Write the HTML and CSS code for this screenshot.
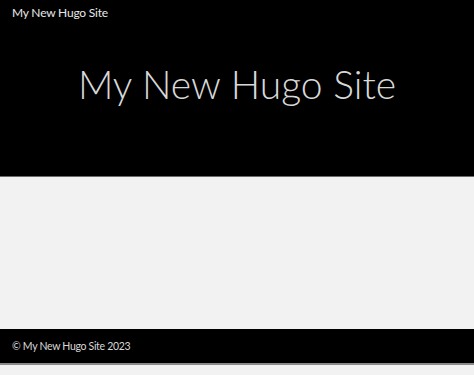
FILE: index.html
```html
<!DOCTYPE html>
<html lang="en">
<head>
  <meta charset="UTF-8" />
  <meta name="viewport" content="width=device-width, initial-scale=1.0" />
  <title>My New Hugo Site</title>
  <link rel="stylesheet" href="styles.css">
</head>
<body>
  <header class="site-header">
    <a class="brand" href="#">My New Hugo Site</a>
    <h1 class="hero-title">My New Hugo Site</h1>
  </header>

  <main class="content"></main>

  <footer class="site-footer">
    &copy; My New Hugo Site 2023
  </footer>
</body>
</html>
```

FILE: styles.css
```css
body {
  font-family: Lato, "Open Sans", sans-serif;
  background-color: #f2f2f2;
  margin: 0;
  padding: 0;
}

.site-header {
  background: #000;
  height: 177px;
  padding: 5px 12px 0;
  box-sizing: border-box;
  border-bottom: 1px solid #6a6a6a;
}

.brand {
  display: block;
  color: #e8e8e8;
  font-size: 12px;
  font-weight: 400;
  letter-spacing: -0.2px;
  text-decoration: none;
  line-height: 16px;
}

.hero-title {
  margin: 39px 0 0;
  text-align: center;
  color: #d8d8d8;
  font-size: 39px;
  font-weight: 300;
  line-height: 48px;
}

.content {
  height: 152px;
}

.site-footer {
  background: #000;
  color: #d8d8d8;
  height: 34px;
  line-height: 34px;
  padding: 0 12px;
  font-size: 10.5px;
  letter-spacing: -0.3px;
  border-bottom: 2px solid #8a8a8a;
}
```
